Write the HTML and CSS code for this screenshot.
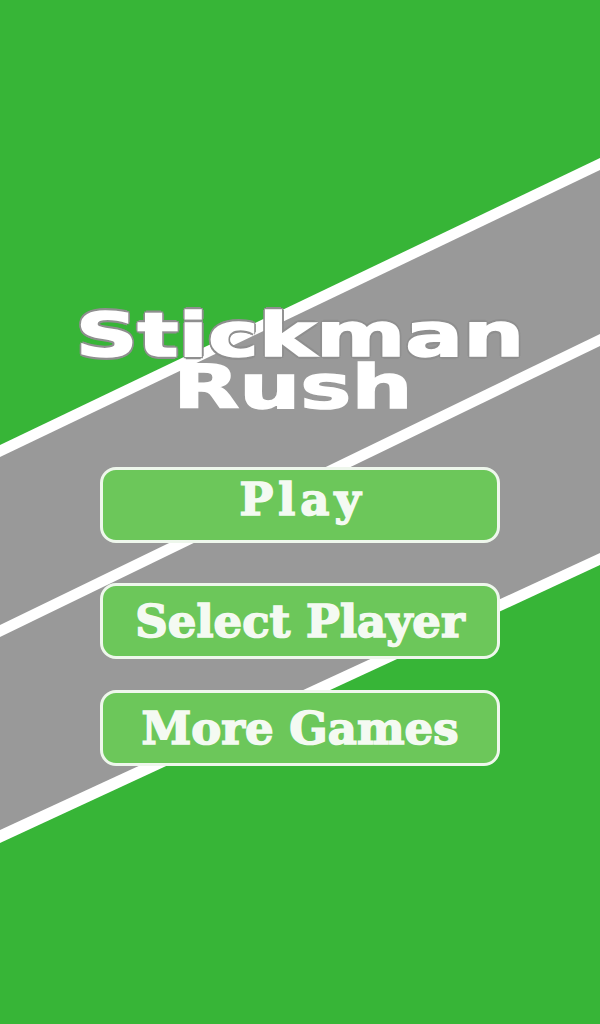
FILE: index.html
```html
<!DOCTYPE html>
<html lang="en">
<head>
    <meta charset="UTF-8">
    <meta name="viewport" content="width=device-width, initial-scale=1.0">
    <title>Stickman Rush</title>
    <link rel="stylesheet" href="styles.css">
</head>
<body>
    <div class="screen">
        <!-- grass with the running track across it -->
        <svg class="track" viewBox="0 0 600 1024" width="600" height="1024">
            <rect width="600" height="1024" fill="#37b537"/>
            <polygon points="0,451 600,164 600,559 0,836" fill="#999999"/>
            <polygon points="0,445 600,158 600,170 0,457" fill="#ffffff"/>
            <polygon points="0,625 600,334 600,346 0,637" fill="#ffffff"/>
            <polygon points="0,830 600,553 600,565 0,843" fill="#ffffff"/>
        </svg>

        <div class="menu">
            <h1 class="title">
                <span class="title-top">Stickman</span>
                <span class="title-bottom">Rush</span>
            </h1>

            <div class="buttons">
                <button class="menu-button play">Play</button>
                <button class="menu-button">Select Player</button>
                <button class="menu-button">More Games</button>
            </div>
        </div>
    </div>
</body>
</html>
```

FILE: styles.css
```css
:root {
    --grass: #37b537;
    --button-fill: #6cc75a;
    --button-edge: #eef7ec;
    --button-text: #f4faf2;
    --outline: #8f8f8f;
}

body {
    margin: 0;
    background: var(--grass);
}

.screen {
    position: relative;
    width: 600px;
    height: 1024px;
    overflow: hidden;
}

.track {
    position: absolute;
    top: 0;
    left: 0;
    display: block;
}

.menu {
    position: relative;
    display: flex;
    flex-direction: column;
    align-items: center;
    padding-top: 309px;
}

.title {
    margin: 0;
    width: 600px;
    text-align: center;
    font-family: 'DejaVu Sans', sans-serif;
    font-weight: 700;
    font-size: 60px;
    line-height: 52px;
    color: #ffffff;
    -webkit-text-stroke: 1.5px #ffffff;
    transform: scaleX(1.43);
}

.title span {
    display: block;
}

.title-top {
    text-shadow:
        2px 0 0 var(--outline), -2px 0 0 var(--outline),
        0 2.6px 0 var(--outline), 0 -2.6px 0 var(--outline),
        1.5px 2px 0 var(--outline), -1.5px 2px 0 var(--outline),
        1.5px -2px 0 var(--outline), -1.5px -2px 0 var(--outline);
}

.title-bottom {
    padding-right: 10px;
}

.buttons {
    display: flex;
    flex-direction: column;
    gap: 31px;
    margin-top: 54px;
}

.menu-button {
    display: flex;
    align-items: center;
    justify-content: center;
    box-sizing: border-box;
    width: 400px;
    height: 76px;
    padding: 0;
    background: var(--button-fill);
    border: 3px solid var(--button-edge);
    border-radius: 16px;
    color: var(--button-text);
    font-family: 'DejaVu Serif', serif;
    font-weight: 700;
    font-size: 45px;
    -webkit-text-stroke: 1.6px var(--button-text);
    cursor: pointer;
}

.menu-button.play {
    padding-bottom: 12px;
    margin-bottom: 9px;
    letter-spacing: 5px;
    text-indent: 5px;
}
```
